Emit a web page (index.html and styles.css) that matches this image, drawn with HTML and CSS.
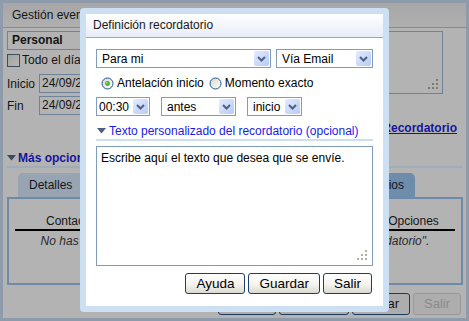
FILE: index.html
```html
<!DOCTYPE html>
<html lang="es">
<head>
<meta charset="utf-8">
<title>Gestión eventos</title>
<link rel="stylesheet" href="styles.css">
</head>
<body>
<div class="app">
  <div class="app-header">Gestión eventos</div>
  <div class="top-form">
    <div class="left-col">
      <div class="field title-field">Personal</div>
      <div class="check-row"><span class="checkbox"></span><span>Todo el día</span></div>
      <div class="date-row"><span class="date-label">Inicio</span><span class="field date-field">24/09/2008 10:00</span></div>
      <div class="date-row date-row-2"><span class="date-label">Fin</span><span class="field date-field">24/09/2008 11:00</span></div>
    </div>
    <div class="desc-field">
      <svg class="grip" width="10" height="10" viewBox="0 0 10 10"><g fill="#7d7a70"><rect x="8" y="0" width="2" height="2"/><rect x="4" y="4" width="2" height="2"/><rect x="8" y="4" width="2" height="2"/><rect x="0" y="8" width="2" height="2"/><rect x="4" y="8" width="2" height="2"/><rect x="8" y="8" width="2" height="2"/></g></svg>
    </div>
  </div>
  <div class="link-row"><span class="bg-link">Añadir Recordatorio</span></div>
  <div class="more-row">
    <svg class="tri" width="9" height="6" viewBox="0 0 9 6"><polygon points="0,0 9,0 4.5,5.5" fill="#3a4a60"/></svg>
    <span class="more-text">Más opciones</span>
  </div>
  <div class="tabs">
    <div class="tab">Detalles</div>
    <div class="tab tab-mid">Participantes</div>
    <div class="tab tab-active">Recordatorios</div>
  </div>
  <div class="panel">
    <div class="tbl-head"><span>Contacto</span><span>Medio</span><span>Opciones</span></div>
    <div class="tbl-empty">No has definido ningún recordatorio aún. Pulsa en "Añadir Recordatorio".</div>
  </div>
  <div class="bg-buttons">
    <span class="bg-btn">Ayuda</span>
    <span class="bg-btn">Guardar</span>
    <span class="bg-btn">Borrar</span>
    <span class="bg-btn bg-btn-disabled">Salir</span>
  </div>
</div>

<div class="dialog">
  <div class="dlg-title">Definición recordatorio</div>
  <div class="dlg-body">
    <div class="row row-selects">
      <div class="sel sel-who"><span class="sel-text">Para mi</span><span class="sel-btn"><svg width="15" height="15" viewBox="0 0 15 15"><path d="M4 6 L7.5 9.5 L11 6" fill="none" stroke="#4d6185" stroke-width="2"/></svg></span></div>
      <div class="sel sel-via"><span class="sel-text">Vía Email</span><span class="sel-btn"><svg width="15" height="15" viewBox="0 0 15 15"><path d="M4 6 L7.5 9.5 L11 6" fill="none" stroke="#4d6185" stroke-width="2"/></svg></span></div>
    </div>
    <div class="row row-radios">
      <span class="radio">
        <svg width="13" height="13" viewBox="0 0 13 13"><defs><linearGradient id="rg1" x1="0" y1="0" x2="1" y2="1"><stop offset="0" stop-color="#d6d6ce"/><stop offset="1" stop-color="#ffffff"/></linearGradient></defs><circle cx="6.5" cy="6.5" r="5.5" fill="url(#rg1)" stroke="#23548a"/><circle cx="6.5" cy="6.5" r="2.4" fill="#3fb22a"/><circle cx="6" cy="6" r="1" fill="#8fe07a"/></svg>
        <span>Antelación inicio</span>
      </span>
      <span class="radio radio-2">
        <svg width="13" height="13" viewBox="0 0 13 13"><defs><linearGradient id="rg2" x1="0" y1="0" x2="1" y2="1"><stop offset="0" stop-color="#d6d6ce"/><stop offset="1" stop-color="#ffffff"/></linearGradient></defs><circle cx="6.5" cy="6.5" r="5.5" fill="url(#rg2)" stroke="#23548a"/></svg>
        <span>Momento exacto</span>
      </span>
    </div>
    <div class="row row-time">
      <div class="sel sel-time"><span class="sel-text">00:30</span><span class="sel-btn"><svg width="15" height="15" viewBox="0 0 15 15"><path d="M4 6 L7.5 9.5 L11 6" fill="none" stroke="#4d6185" stroke-width="2"/></svg></span></div>
      <div class="sel sel-when"><span class="sel-text">antes</span><span class="sel-btn"><svg width="15" height="15" viewBox="0 0 15 15"><path d="M4 6 L7.5 9.5 L11 6" fill="none" stroke="#4d6185" stroke-width="2"/></svg></span></div>
      <div class="sel sel-ref"><span class="sel-text">inicio</span><span class="sel-btn"><svg width="15" height="15" viewBox="0 0 15 15"><path d="M4 6 L7.5 9.5 L11 6" fill="none" stroke="#4d6185" stroke-width="2"/></svg></span></div>
    </div>
    <div class="custom-link">
      <svg class="tri" width="9" height="6" viewBox="0 0 9 6"><polygon points="0,0 9,0 4.5,5.5" fill="#4a5e7e"/></svg>
      <span class="custom-text">Texto personalizado del recordatorio (opcional)</span>
    </div>
    <div class="msg">
      <span>Escribe aquí el texto que desea que se envíe.</span>
      <svg class="msg-grip" width="10" height="10" viewBox="0 0 10 10"><g fill="#b3ae9f"><rect x="8" y="0" width="2" height="2"/><rect x="4" y="4" width="2" height="2"/><rect x="8" y="4" width="2" height="2"/><rect x="0" y="8" width="2" height="2"/><rect x="4" y="8" width="2" height="2"/><rect x="8" y="8" width="2" height="2"/></g></svg>
    </div>
    <div class="dlg-buttons">
      <button class="btn">Ayuda</button>
      <button class="btn">Guardar</button>
      <button class="btn btn-last">Salir</button>
    </div>
  </div>
</div>
</body>
</html>
```

FILE: styles.css
```css
* { box-sizing: border-box; }
html, body { margin: 0; }
body {
  width: 469px;
  height: 321px;
  padding: 3px;
  background: #8e9bab;
  font: 12px "Liberation Sans", Arial, sans-serif;
  color: #151515;
  position: relative;
  overflow: hidden;
}
.app {
  width: 463px;
  height: 315px;
  background: #b3b3b3;
  display: flex;
  flex-direction: column;
}
.app-header {
  height: 25px;
  line-height: 24px;
  padding-left: 9px;
  background: linear-gradient(#a7a7a7, #afafaf);
  border-bottom: 1px solid #8a8a8a;
}
.top-form {
  display: flex;
  gap: 10px;
  padding: 3px 23px 0 4px;
}
.left-col {
  width: 250px;
  display: flex;
  flex-direction: column;
}
.field {
  height: 19px;
  line-height: 17px;
  border: 1px solid #6f8398;
  padding: 0 4px;
  white-space: nowrap;
  overflow: hidden;
}
.title-field { font-weight: bold; }
.check-row {
  display: flex;
  align-items: center;
  gap: 2px;
  height: 14px;
  margin-top: 3px;
}
.checkbox {
  width: 13px;
  height: 13px;
  border: 1px solid #3d4e62;
  background: linear-gradient(135deg, #a4a4a0, #b6b6b6);
}
.date-row {
  display: flex;
  align-items: center;
  margin-top: 7px;
}
.date-row-2 { margin-top: 3px; }
.date-label { width: 32px; }
.date-field { flex: 1; padding-left: 2px; }
.desc-field {
  flex: 1;
  height: 63px;
  border: 1px solid #6f8398;
  display: flex;
  align-items: flex-end;
  justify-content: flex-end;
  padding: 0 4px 4px 0;
}
.link-row {
  display: flex;
  justify-content: flex-end;
  padding-right: 9px;
  margin-top: 5px;
  line-height: 16px;
}
.bg-link {
  font-weight: bold;
  color: #16169c;
  text-decoration: underline;
}
.more-row {
  display: flex;
  align-items: center;
  gap: 2px;
  margin: 14px 3px 0 4px;
  height: 18px;
  border-bottom: 2px solid #a0acb8;
  padding-bottom: 0;
}
.more-text {
  font-weight: bold;
  color: #16169c;
  line-height: 16px;
}
.tabs {
  display: flex;
  gap: 2px;
  height: 24px;
  margin: 5px 3px 0 4px;
  padding: 0 48px 0 11px;
}
.tab {
  padding: 0 11px;
  line-height: 24px;
  background: #98a4b2;
  border-radius: 5px 5px 0 0;
  white-space: nowrap;
}
.tab-mid { flex: 1; }
.tab-active { background: #6e8cab; }
.panel {
  height: 88px;
  margin: 0 3px 0 4px;
  border: 2px solid #6f8aa8;
  padding: 14px 6px 0;
}
.tbl-head {
  display: grid;
  grid-template-columns: 110px 1fr 83px;
  text-align: center;
  line-height: 16px;
  border-bottom: 2px solid #000;
}
.tbl-empty {
  text-align: center;
  font-style: italic;
  line-height: 16px;
  margin-top: 2px;
  color: #2a2a2a;
  white-space: nowrap;
}
.bg-buttons {
  display: flex;
  justify-content: flex-end;
  gap: 3px;
  margin-top: 8px;
  padding-right: 5px;
}
.bg-btn {
  height: 22px;
  line-height: 20px;
  padding: 0 10px;
  border: 1px solid #1d3b5e;
  border-radius: 3px;
  background: #adadad;
  font-size: 13px;
}
.bg-btn-disabled {
  border-color: #999;
  color: #8a8a8a;
}

/* dialog */
.dialog {
  position: absolute;
  left: 80px;
  top: 8px;
  width: 309px;
  height: 304px;
  border: 6px solid #cde0f3;
  border-radius: 4px;
  background: #fff;
  color: #000;
}
.dlg-title {
  height: 24px;
  line-height: 23px;
  padding-left: 7px;
  background: linear-gradient(#ffffff, #e8ecf5);
  border-bottom: 1px solid #a6a6a6;
  color: #1a1a1a;
}
.dlg-body {
  padding: 11px 10px 0;
  display: flex;
  flex-direction: column;
}
.row { display: flex; }
.row-selects { gap: 5px; }
.sel {
  height: 19px;
  border: 1px solid #7f9db9;
  padding: 1px;
  display: flex;
  align-items: center;
  background: #fff;
}
.sel-text {
  flex: 1;
  padding-left: 4px;
  white-space: nowrap;
  overflow: hidden;
}
.sel-btn {
  width: 15px;
  height: 15px;
  display: flex;
  border-radius: 2px;
  background: linear-gradient(135deg, #e3ebfe, #b7cbf6);
}
.sel-who { width: 175px; }
.sel-via { width: 97px; }
.row-radios {
  margin-top: 7px;
  height: 16px;
  align-items: center;
}
.radio {
  display: flex;
  align-items: center;
  gap: 3px;
  line-height: 16px;
  padding-left: 5px;
}
.radio svg { display: block; }
.radio-2 { padding-left: 5px; }
.row-time {
  margin-top: 6px;
  gap: 11px;
}
.sel-time { width: 54px; }
.sel-time .sel-text { padding-left: 1px; }
.sel-when { width: 75px; }
.sel-ref { width: 55px; }
.custom-link {
  display: flex;
  align-items: center;
  gap: 3px;
  margin-top: 7px;
  height: 18px;
  padding-left: 1px;
  border-bottom: 2px solid #cde0f3;
}
.custom-text {
  color: #1a1aea;
  line-height: 16px;
}
.msg {
  margin-top: 5px;
  height: 120px;
  border: 1px solid #7f9db9;
  padding: 3px 5px 5px 4px;
  line-height: 16px;
  display: flex;
  flex-direction: column;
}
.msg-grip {
  margin-top: auto;
  align-self: flex-end;
}
.dlg-buttons {
  display: flex;
  justify-content: flex-end;
  gap: 3px;
  margin-top: 7px;
  padding-right: 1px;
}
.btn {
  height: 21px;
  padding: 0 10px;
  border: 1px solid #1b3f6a;
  border-radius: 3px;
  background: linear-gradient(#ffffff, #f4f3ee 55%, #dcdad0);
  font: 13.5px "Liberation Sans", Arial, sans-serif;
  color: #000;
  margin: 0;
}
```
